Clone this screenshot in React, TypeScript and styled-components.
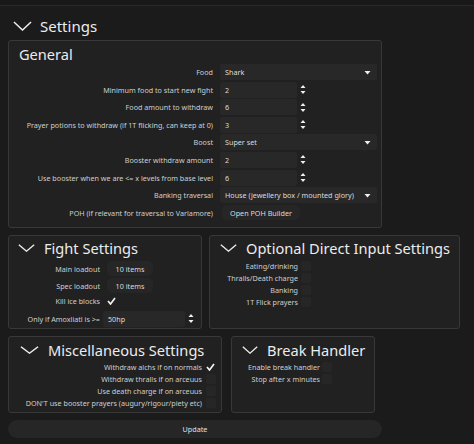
import React from "react";
import styled, { createGlobalStyle } from "styled-components";

const GlobalStyle = createGlobalStyle`
  html, body {
    margin: 0;
    padding: 0;
    background: #1b1b1b;
  }
  * {
    box-sizing: border-box;
  }
`;

const Page = styled.div`
  width: 474px;
  height: 444px;
  overflow: hidden;
  background: #1b1b1b;
  color: #e4e4e4;
  font-family: "Noto Sans", "Open Sans", sans-serif;
`;

const TopStrip = styled.div`
  height: 6px;
  background: #191919;
  border-bottom: 1px solid #2a2a2a;
`;

const Content = styled.div`
  padding: 0 8px;
  display: flex;
  flex-direction: column;
`;

const Header = styled.div`
  height: 34px;
  display: flex;
  align-items: center;
  padding: 6px 0 0 5px;
  gap: 8px;
  font-size: 15px;
  color: #ececec;
`;

const Panel = styled.div<{ $w: number; $h: number }>`
  width: ${(p) => p.$w}px;
  height: ${(p) => p.$h}px;
  background: #212121;
  border: 1px solid #383838;
  border-radius: 3px;
  display: flex;
  flex-direction: column;
`;

const PanelTitle = styled.div<{ $pl: number; $h?: number; $pt?: number }>`
  display: flex;
  align-items: center;
  gap: 9px;
  height: ${(p) => p.$h ?? 22}px;
  padding-top: ${(p) => p.$pt ?? 0}px;
  padding-left: ${(p) => p.$pl}px;
  font-size: 14.6px;
  color: #ececec;
  white-space: nowrap;
`;

const Form = styled.div<{ $label: number; $gap: number; $row: number; $rowGap: number }>`
  display: grid;
  grid-template-columns: ${(p) => p.$label}px auto;
  grid-auto-rows: ${(p) => p.$row}px;
  column-gap: ${(p) => p.$gap}px;
  row-gap: ${(p) => p.$rowGap}px;
  align-items: center;
  justify-content: start;
`;

const Label = styled.div<{ $shift?: number }>`
  text-align: right;
  font-size: 7.2px;
  color: #cfcfcf;
  white-space: nowrap;
  margin-top: ${(p) => p.$shift ?? 0}px;
`;

const Cell = styled.div<{ $shift?: number; $ml?: number }>`
  display: flex;
  margin-top: ${(p) => p.$shift ?? 0}px;
  margin-left: ${(p) => p.$ml ?? 0}px;
`;

const Field = styled.div<{ $w: number }>`
  width: ${(p) => p.$w}px;
  height: 16px;
  background: #282828;
  border-radius: 2px;
  display: flex;
  align-items: center;
  justify-content: space-between;
  padding: 0 6px 0 5px;
  font-size: 7.2px;
  color: #dcdcdc;
  white-space: nowrap;
`;

const NumberWrap = styled.div`
  display: flex;
  align-items: center;
  gap: 3px;
`;

const ButtonBox = styled.div<{ $w: number; $ml?: number }>`
  width: ${(p) => p.$w}px;
  height: 15px;
  margin-left: ${(p) => p.$ml ?? 0}px;
  background: #262626;
  border-radius: 5px;
  display: flex;
  align-items: center;
  justify-content: center;
  font-size: 7.2px;
  color: #dcdcdc;
  white-space: nowrap;
`;

const Box = styled.div`
  width: 10px;
  height: 10px;
  background: #262626;
  border-radius: 2px;
`;

const BottomRow = styled.div<{ $gap: number; $mt: number }>`
  display: flex;
  gap: ${(p) => p.$gap}px;
  margin-top: ${(p) => p.$mt}px;
`;

const UpdateButton = styled.div`
  width: 374px;
  height: 18px;
  margin-top: 7px;
  background: #262626;
  border-radius: 9px;
  display: flex;
  align-items: center;
  justify-content: center;
  font-size: 7.2px;
  color: #e0e0e0;
`;

const Chevron = ({ w, h }: { w: number; h: number }) => (
  <svg width={w} height={h} viewBox="0 0 20 10" preserveAspectRatio="none">
    <path d="M1 1 L10 9 L19 1" fill="none" stroke="#ececec" strokeWidth="1.6" />
  </svg>
);

const Caret = () => (
  <svg width="7" height="5" viewBox="0 0 7 5">
    <path d="M0.5 1 L6.5 1 L3.5 4.5 Z" fill="#f0f0f0" />
  </svg>
);

const Spinner = () => (
  <svg width="6" height="11" viewBox="0 0 6 11">
    <path d="M0.5 4 L5.5 4 L3 1 Z" fill="#f0f0f0" />
    <path d="M0.5 7 L5.5 7 L3 10 Z" fill="#f0f0f0" />
  </svg>
);

const Check = () => (
  <svg width="9" height="8" viewBox="0 0 9 8">
    <path d="M1 4 L3.5 7 L8 1" fill="none" stroke="#f2f2f2" strokeWidth="1.7" />
  </svg>
);

const Select = ({ w, value }: { w: number; value: string }) => (
  <Field $w={w}>
    <span>{value}</span>
    <Caret />
  </Field>
);

const NumberInput = ({ w, value }: { w: number; value: string }) => (
  <NumberWrap>
    <Field $w={w}>{value}</Field>
    <Spinner />
  </NumberWrap>
);

const CheckBox = ({ checked }: { checked?: boolean }) =>
  checked ? <Check /> : <Box />;

export default function App() {
  return (
    <Page>
      <GlobalStyle />
      <TopStrip />
      <Content>
        <Header>
          <Chevron w={19} h={10} />
          <span>Settings</span>
        </Header>

        <Panel $w={374} $h={188}>
          <PanelTitle $pl={10} $h={23} $pt={2}>
            General
          </PanelTitle>
          <Form $label={204} $gap={7} $row={16} $rowGap={1.6}>
            <Label>Food</Label>
            <Select w={157} value="Shark" />
            <Label>Minimum food to start new fight</Label>
            <NumberInput w={77} value="2" />
            <Label>Food amount to withdraw</Label>
            <NumberInput w={77} value="6" />
            <Label>Prayer potions to withdraw (if 1T flicking, can keep at 0)</Label>
            <NumberInput w={77} value="3" />
            <Label>Boost</Label>
            <Select w={157} value="Super set" />
            <Label>Booster withdraw amount</Label>
            <NumberInput w={77} value="2" />
            <Label>Use booster when we are &lt;= x levels from base level</Label>
            <NumberInput w={77} value="6" />
            <Label>Banking traversal</Label>
            <Select w={157} value="House (jewellery box / mounted glory)" />
            <Label>POH (if relevant for traversal to Varlamore)</Label>
            <ButtonBox $w={78} $ml={2}>Open POH Builder</ButtonBox>
          </Form>
        </Panel>

        <BottomRow $gap={7} $mt={7}>
          <Panel $w={194} $h={94}>
            <PanelTitle $pl={9} $h={24}>
              <Chevron w={17} h={8} />
              <span>Fight Settings</span>
            </PanelTitle>
            <Form $label={91} $gap={3} $row={17} $rowGap={0}>
              <Label>Main loadout</Label>
              <ButtonBox $w={46} $ml={4}>10 items</ButtonBox>
              <Label>Spec loadout</Label>
              <ButtonBox $w={46} $ml={4}>10 items</ButtonBox>
              <Label $shift={-3}>Kill ice blocks</Label>
              <Cell $shift={-3} $ml={4}>
                <CheckBox checked />
              </Cell>
              <Label $shift={-2}>Only if Amoxliatl is &gt;=</Label>
              <Cell $shift={-2}>
                <NumberInput w={82} value="50hp" />
              </Cell>
            </Form>
          </Panel>

          <Panel $w={251} $h={94}>
            <PanelTitle $pl={10} $h={24}>
              <Chevron w={17} h={8} />
              <span>Optional Direct Input Settings</span>
            </PanelTitle>
            <Form $label={88} $gap={3} $row={11} $rowGap={1.3}>
              <Label>Eating/drinking</Label>
              <CheckBox />
              <Label>Thralls/Death charge</Label>
              <CheckBox />
              <Label>Banking</Label>
              <CheckBox />
              <Label>1T Flick prayers</Label>
              <CheckBox />
            </Form>
          </Panel>
        </BottomRow>

        <BottomRow $gap={9} $mt={7}>
          <Panel $w={214} $h={77}>
            <PanelTitle $pl={11} $h={24} $pt={1}>
              <Chevron w={19} h={8} />
              <span>Miscellaneous Settings</span>
            </PanelTitle>
            <Form $label={193} $gap={4} $row={11} $rowGap={1.3}>
              <Label>Withdraw alchs if on normals</Label>
              <CheckBox checked />
              <Label>Withdraw thralls if on arceuus</Label>
              <CheckBox />
              <Label>Use death charge if on arceuus</Label>
              <CheckBox />
              <Label>DON'T use booster prayers (augury/rigour/piety etc)</Label>
              <CheckBox />
            </Form>
          </Panel>

          <Panel $w={144} $h={77}>
            <PanelTitle $pl={10} $h={24} $pt={1}>
              <Chevron w={16} h={8} />
              <span>Break Handler</span>
            </PanelTitle>
            <Form $label={88} $gap={2} $row={11} $rowGap={1.3}>
              <Label>Enable break handler</Label>
              <CheckBox />
              <Label>Stop after x minutes</Label>
              <CheckBox />
            </Form>
          </Panel>
        </BottomRow>

        <UpdateButton>Update</UpdateButton>
      </Content>
    </Page>
  );
}
